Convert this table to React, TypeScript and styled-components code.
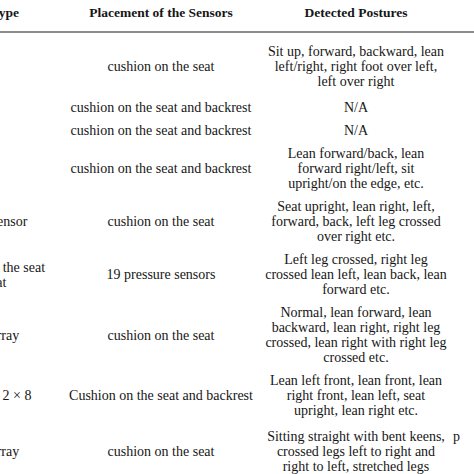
import React from 'react';
import styled, { createGlobalStyle } from 'styled-components';

// Page reset: the screenshot is a crop of a wider table, so the body clips it
const GlobalStyle = createGlobalStyle`
  html, body {
    margin: 0;
    padding: 0;
    background: #ffffff;
    overflow: hidden;
  }
  body {
    width: 474px;
    height: 474px;
  }
`;

const Frame = styled.div`
  width: 474px;
  height: 474px;
  overflow: hidden;
`;

const Table = styled.table`
  margin-left: -106px;
  border-collapse: collapse;
  table-layout: fixed;
  width: 616px;
  font-family: 'Liberation Serif', 'Times New Roman', serif;
  font-size: 14px;
  line-height: 15px;
  color: #161616;
`;

const HeadCell = styled.th<{ $align?: 'left' | 'center' }>`
  padding: 5px 0 11px;
  border-bottom: 2px solid #8c8c8c;
  font-size: 13.5px;
  font-weight: 700;
  text-align: ${(p) => p.$align ?? 'center'};
  white-space: nowrap;
`;

const TypeHead = styled(HeadCell)`
  padding-left: 14px;
`;

const Cell = styled.td<{ $align?: 'left' | 'center'; $top?: boolean }>`
  padding: 4px 0;
  text-align: ${(p) => p.$align ?? 'center'};
  vertical-align: ${(p) => (p.$top ? 'top' : 'middle')};
  padding-left: ${(p) => (p.$align === 'left' ? '3px' : '0')};
  white-space: nowrap;
`;

const TypeCell = styled(Cell)`
  padding-left: 14px;
`;

const FirstRow = styled.tr`
  td {
    padding-top: 11px;
    padding-bottom: 7px;
  }
`;

const Row = styled.tr<{ $last?: boolean }>`
  td {
    padding-top: ${(p) => (p.$last ? '7px' : '4px')};
  }
`;

const Line = styled.span`
  display: block;
  white-space: nowrap;
`;

interface Entry {
  type: string[];
  place: string;
  postures: string[];
  extra?: string;
}

const entries: Entry[] = [
  {
    type: ['FSR'],
    place: 'cushion on the seat',
    postures: ['Sit up, forward, backward, lean', 'left/right, right foot over left,', 'left over right'],
  },
  { type: ['N/A'], place: 'cushion on the seat and backrest', postures: ['N/A'] },
  { type: ['N/A'], place: 'cushion on the seat and backrest', postures: ['N/A'] },
  {
    type: ['FSR'],
    place: 'cushion on the seat and backrest',
    postures: ['Lean forward/back, lean', 'forward right/left, sit', 'upright/on the edge, etc.'],
  },
  {
    type: ['Pressure sensor'],
    place: 'cushion on the seat',
    postures: ['Seat upright, lean right, left,', 'forward, back, left leg crossed', 'over right etc.'],
  },
  {
    type: ['16 sensors on the seat', 'and mat'],
    place: '19 pressure sensors',
    postures: ['Left leg crossed, right leg', 'crossed lean left, lean back, lean', 'forward etc.'],
  },
  {
    type: ['Sensor array'],
    place: 'cushion on the seat',
    postures: [
      'Normal, lean forward, lean',
      'backward, lean right, right leg',
      'crossed, lean right with right leg',
      'crossed etc.',
    ],
  },
  {
    type: ['Sensor mat 2 × 8'],
    place: 'Cushion on the seat and backrest',
    postures: ['Lean left front, lean front, lean', 'right front, lean left, seat', 'upright, lean right etc.'],
  },
  {
    type: ['Sensor array'],
    place: 'cushion on the seat',
    postures: ['Sitting straight with bent keens,', 'crossed legs left to right and', 'right to left, stretched legs'],
    extra: 'p',
  },
];

const Lines: React.FC<{ lines: string[] }> = ({ lines }) => (
  <>
    {lines.map((l, i) => (
      <Line key={i}>{l}</Line>
    ))}
  </>
);

const App: React.FC = () => {
  return (
    <Frame>
      <GlobalStyle />
      <Table>
        <colgroup>
          <col style={{ width: 166 }} />
          <col style={{ width: 202 }} />
          <col style={{ width: 188 }} />
          <col style={{ width: 60 }} />
        </colgroup>
        <thead>
          <tr>
            <TypeHead>Sensor Type</TypeHead>
            <HeadCell>Placement of the Sensors</HeadCell>
            <HeadCell>Detected Postures</HeadCell>
            <HeadCell $align="left" />
          </tr>
        </thead>
        <tbody>
          {entries.map((e, i) => {
            const cells = (
              <>
                <TypeCell>
                  <Lines lines={e.type} />
                </TypeCell>
                <Cell>{e.place}</Cell>
                <Cell>
                  <Lines lines={e.postures} />
                </Cell>
                <Cell $align="left" $top>
                  {e.extra}
                </Cell>
              </>
            );
            return i === 0 ? (
              <FirstRow key={i}>{cells}</FirstRow>
            ) : (
              <Row key={i} $last={i === entries.length - 1}>
                {cells}
              </Row>
            );
          })}
        </tbody>
      </Table>
    </Frame>
  );
};

export default App;
